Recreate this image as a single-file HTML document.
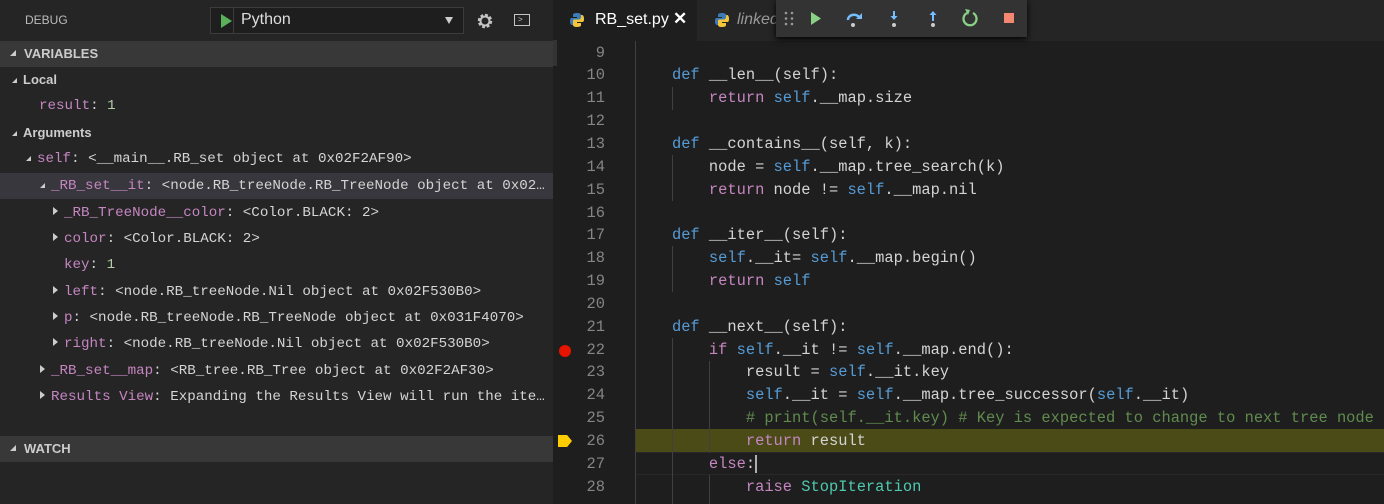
<!DOCTYPE html>
<html><head><style>
*{margin:0;padding:0;box-sizing:border-box}
body{width:1384px;height:504px;background:#1e1e1e;overflow:hidden;position:relative;font-family:"Liberation Sans",sans-serif}
#side{position:absolute;left:0;top:0;width:553px;height:504px;background:#252526}
.hdr{position:absolute;left:0;width:553px;height:26px;background:#383838;color:#ccc;font-weight:bold;font-size:13px;line-height:26px;padding-left:24px}
.hdr:before{content:"";position:absolute;left:10px;top:9px;border-left:6px solid transparent;border-bottom:6px solid #ccc}
.row{position:absolute;left:0;width:553px;height:26px;line-height:26px;font-family:"Liberation Mono",monospace;font-size:14.2px;color:#d4d4d4;white-space:nowrap;overflow:hidden}
.row.b{font-family:"Liberation Sans",sans-serif;font-weight:bold;font-size:13px;color:#ccc}
.n{color:#c586c0}.v{color:#b5cea8}
.ex:before,.co:before{content:"";display:inline-block;margin-right:6px;vertical-align:1px}
.ex:before{border-left:5px solid transparent;border-bottom:5px solid #ccc}
.co:before{border-top:4px solid transparent;border-bottom:4px solid transparent;border-left:5px solid #ccc}
#ed{position:absolute;left:553px;top:0;width:831px;height:504px;background:#1e1e1e}
#tabs{position:absolute;left:0;top:0;width:831px;height:41px;background:#252526}
.ln{position:absolute;left:0;width:52px;text-align:right;color:#858585;font-family:"Liberation Mono",monospace;font-size:15.4px;height:22.84px;line-height:22.84px}
.cd{position:absolute;left:82px;white-space:pre;color:#d4d4d4;font-family:"Liberation Mono",monospace;font-size:15.4px;height:22.84px;line-height:22.84px}
.k{color:#569cd6}.p{color:#c586c0}.c{color:#608b4e}.t{color:#4ec9b0}
.g{position:absolute;width:1px;background:#404040}
</style></head><body>
<div id="side">
 <div style="position:absolute;left:25px;top:13px;font-size:12px;color:#bbb">DEBUG</div>
 <div style="position:absolute;left:210px;top:7px;width:254px;height:27px;border:1px solid #3c3c3c;background:#1e1e1e">
  <div style="position:absolute;left:10px;top:6px;border-top:7px solid transparent;border-bottom:7px solid transparent;border-left:11px solid #59b259"></div>
  <div style="position:absolute;left:22px;top:0;width:1px;height:25px;background:#3c3c3c"></div>
  <div style="position:absolute;left:30px;top:3px;font-size:16px;color:#ddd">Python</div>
  <div style="position:absolute;left:234px;top:9px;border-left:4px solid transparent;border-right:4px solid transparent;border-top:7px solid #ccc"></div>
 </div>
 <svg style="position:absolute;left:475px;top:11px" width="20" height="20" viewBox="0 0 20 20"><circle cx="10" cy="10" r="5.5" fill="none" stroke="#c5c5c5" stroke-width="3.5" stroke-dasharray="2.6 1.7"/><circle cx="10" cy="10" r="4.5" fill="none" stroke="#c5c5c5" stroke-width="2"/></svg>
 <div style="position:absolute;left:514px;top:14px;width:16px;height:12px;border:1px solid #c5c5c5;font-size:8px;color:#c5c5c5;line-height:9px;padding-left:3px">&gt;</div>
 <div class="hdr" style="top:41px">VARIABLES</div>
 <div class="row b" style="top:67px;padding-left:12px"><span class="ex"></span>Local</div>
 <div class="row" style="top:93px;padding-left:39px"><span class="n">result</span>: <span class="v">1</span></div>
 <div class="row b" style="top:120px;padding-left:12px"><span class="ex"></span>Arguments</div>
 <div class="row" style="top:146px;padding-left:26px"><span class="ex"></span><span class="n">self</span>: &lt;__main__.RB_set object at 0x02F2AF90&gt;</div>
 <div class="row" style="top:173px;padding-left:40px;background:#37373d"><span class="ex"></span><span class="n">_RB_set__it</span>: &lt;node.RB_treeNode.RB_TreeNode object at 0x02…</div>
 <div class="row" style="top:200px;padding-left:53px"><span class="co"></span><span class="n">_RB_TreeNode__color</span>: &lt;Color.BLACK: 2&gt;</div>
 <div class="row" style="top:226px;padding-left:53px"><span class="co"></span><span class="n">color</span>: &lt;Color.BLACK: 2&gt;</div>
 <div class="row" style="top:252px;padding-left:64px"><span class="n">key</span>: <span class="v">1</span></div>
 <div class="row" style="top:279px;padding-left:53px"><span class="co"></span><span class="n">left</span>: &lt;node.RB_treeNode.Nil object at 0x02F530B0&gt;</div>
 <div class="row" style="top:305px;padding-left:53px"><span class="co"></span><span class="n">p</span>: &lt;node.RB_treeNode.RB_TreeNode object at 0x031F4070&gt;</div>
 <div class="row" style="top:331px;padding-left:53px"><span class="co"></span><span class="n">right</span>: &lt;node.RB_treeNode.Nil object at 0x02F530B0&gt;</div>
 <div class="row" style="top:358px;padding-left:40px"><span class="co"></span><span class="n">_RB_set__map</span>: &lt;RB_tree.RB_Tree object at 0x02F2AF30&gt;</div>
 <div class="row" style="top:384px;padding-left:40px"><span class="co"></span><span class="n">Results View</span>: Expanding the Results View will run the ite…</div>
 <div class="hdr" style="top:436px">WATCH</div>
</div>
<div id="ed">
 <div id="tabs">
  <div style="position:absolute;left:0;top:0;width:144px;height:41px;background:#1e1e1e"></div>
  <svg style="position:absolute;left:16px;top:12px" width="16" height="16" viewBox="0 0 16 16"><path d="M8 1C4 1 4 2.5 4 3v2h4v1H2.5C1 6 1 8 1 9.5S1.5 13 3 13h1v-2c0-1.5 1-2.5 2.5-2.5h4c1 0 1.5-.5 1.5-1.5V3c0-1-1-2-4-2z" fill="#3d7ab8"/><path d="M8 15c4 0 4-1.5 4-2v-2H8v-1h5.5C15 10 15 8 15 6.5S14.5 3 13 3h-1v2c0 1.5-1 2.5-2.5 2.5h-4C4.5 7.5 4 8 4 9v4c0 1 1 2 4 2z" fill="#f4c53c"/></svg>
  <div style="position:absolute;left:42px;top:11px;font-size:16px;color:#fff">RB_set.py</div>
  <div style="position:absolute;left:120px;top:9px;font-size:17px;color:#fff;font-weight:bold">✕</div>
  <svg style="position:absolute;left:161px;top:12px" width="16" height="16" viewBox="0 0 16 16"><path d="M8 1C4 1 4 2.5 4 3v2h4v1H2.5C1 6 1 8 1 9.5S1.5 13 3 13h1v-2c0-1.5 1-2.5 2.5-2.5h4c1 0 1.5-.5 1.5-1.5V3c0-1-1-2-4-2z" fill="#3d7ab8"/><path d="M8 15c4 0 4-1.5 4-2v-2H8v-1h5.5C15 10 15 8 15 6.5S14.5 3 13 3h-1v2c0 1.5-1 2.5-2.5 2.5h-4C4.5 7.5 4 8 4 9v4c0 1 1 2 4 2z" fill="#f4c53c"/></svg>
  <div style="position:absolute;left:184px;top:11px;font-size:16px;color:#999;font-style:italic">linked</div>
 </div>
 <div style="position:absolute;left:223px;top:0;width:251px;height:37px;background:#333;box-shadow:0 2px 6px #000">
  <svg width="251" height="37" viewBox="0 0 251 37">
   <g fill="#999"><circle cx="10" cy="13" r="1.3"/><circle cx="16" cy="13" r="1.3"/><circle cx="10" cy="18.5" r="1.3"/><circle cx="16" cy="18.5" r="1.3"/><circle cx="10" cy="24" r="1.3"/><circle cx="16" cy="24" r="1.3"/></g>
   <path d="M35 12v13l10-6.5z" fill="#89d185"/>
   <path d="M72 20a6 5 0 0 1 11-3" stroke="#75beff" stroke-width="2.5" fill="none"/><path d="M86 13v6h-6z" fill="#75beff"/><circle cx="77" cy="25" r="2" fill="#ccc"/>
   <path d="M118 11v7" stroke="#75beff" stroke-width="2"/><path d="M114.5 16l3.5 4 3.5-4z" fill="#75beff"/><circle cx="118" cy="25" r="2" fill="#ccc"/>
   <path d="M157 13v8" stroke="#75beff" stroke-width="2"/><path d="M153.5 15l3.5-4 3.5 4z" fill="#75beff"/><circle cx="157" cy="25" r="2" fill="#ccc"/>
   <path d="M191 13a6.5 6.5 0 1 0 6 0" stroke="#89d185" stroke-width="2.3" fill="none"/><path d="M189 9l5 1-2 5z" fill="#89d185"/>
   <rect x="228" y="13" width="10" height="10" fill="#f48771"/>
  </svg>
 </div>
 <div style="position:absolute;left:0;top:40px;width:4px;height:26px;background:#333"></div>
 <div style="position:absolute;left:82px;top:429px;width:749px;height:23px;background:#4b4b18"></div>
 <div style="position:absolute;left:82px;top:452px;width:749px;height:23px;border-top:1px solid #282828;border-bottom:1px solid #282828"></div>
 <div class="g" style="left:82px;top:41px;height:463px"></div>
 <div class="g" style="left:119px;top:87px;height:23px"></div>
 <div class="g" style="left:119px;top:155px;height:46px"></div>
 <div class="g" style="left:119px;top:246px;height:46px"></div>
 <div class="g" style="left:119px;top:338px;height:166px"></div>
 <div class="g" style="left:156px;top:361px;height:92px"></div>
 <div class="g" style="left:156px;top:475px;height:29px"></div>
 <div style="position:absolute;left:6px;top:345px;width:12px;height:12px;border-radius:50%;background:#e51400"></div>
 <div style="position:absolute;left:5px;top:435px;width:14px;height:12px;background:#ffcc00;clip-path:polygon(0 0,65% 0,100% 50%,65% 100%,0 100%)"></div>
 <div style="position:absolute;left:0;top:41px">
 </div>
 <div class="ln" style="top:41.6px">9</div>
 <div class="ln" style="top:64.4px">10</div><div class="cd" style="top:64.4px">    <span class="k">def</span> __len__(self):</div>
 <div class="ln" style="top:87.3px">11</div><div class="cd" style="top:87.3px">        <span class="p">return</span> <span class="k">self</span>.__map.size</div>
 <div class="ln" style="top:110.1px">12</div>
 <div class="ln" style="top:133px">13</div><div class="cd" style="top:133px">    <span class="k">def</span> __contains__(self, k):</div>
 <div class="ln" style="top:155.8px">14</div><div class="cd" style="top:155.8px">        node = <span class="k">self</span>.__map.tree_search(k)</div>
 <div class="ln" style="top:178.6px">15</div><div class="cd" style="top:178.6px">        <span class="p">return</span> node != <span class="k">self</span>.__map.nil</div>
 <div class="ln" style="top:201.5px">16</div>
 <div class="ln" style="top:224.3px">17</div><div class="cd" style="top:224.3px">    <span class="k">def</span> __iter__(self):</div>
 <div class="ln" style="top:247.2px">18</div><div class="cd" style="top:247.2px">        <span class="k">self</span>.__it= <span class="k">self</span>.__map.begin()</div>
 <div class="ln" style="top:270px">19</div><div class="cd" style="top:270px">        <span class="p">return</span> <span class="k">self</span></div>
 <div class="ln" style="top:292.8px">20</div>
 <div class="ln" style="top:315.7px">21</div><div class="cd" style="top:315.7px">    <span class="k">def</span> __next__(self):</div>
 <div class="ln" style="top:338.5px">22</div><div class="cd" style="top:338.5px">        <span class="p">if</span> <span class="k">self</span>.__it != <span class="k">self</span>.__map.end():</div>
 <div class="ln" style="top:361.4px">23</div><div class="cd" style="top:361.4px">            result = <span class="k">self</span>.__it.key</div>
 <div class="ln" style="top:384.2px">24</div><div class="cd" style="top:384.2px">            <span class="k">self</span>.__it = <span class="k">self</span>.__map.tree_successor(<span class="k">self</span>.__it)</div>
 <div class="ln" style="top:407px">25</div><div class="cd" style="top:407px">            <span class="c"># print(self.__it.key) # Key is expected to change to next tree node</span></div>
 <div class="ln" style="top:429.9px">26</div><div class="cd" style="top:429.9px">            <span class="p">return</span> result</div>
 <div class="ln" style="top:452.7px">27</div><div class="cd" style="top:452.7px">        <span class="p">else</span>:<span style="border-left:2px solid #aeafad"></span></div>
 <div class="ln" style="top:475.6px">28</div><div class="cd" style="top:475.6px">            <span class="p">raise</span> <span class="t">StopIteration</span></div>
</div>
</body></html>
